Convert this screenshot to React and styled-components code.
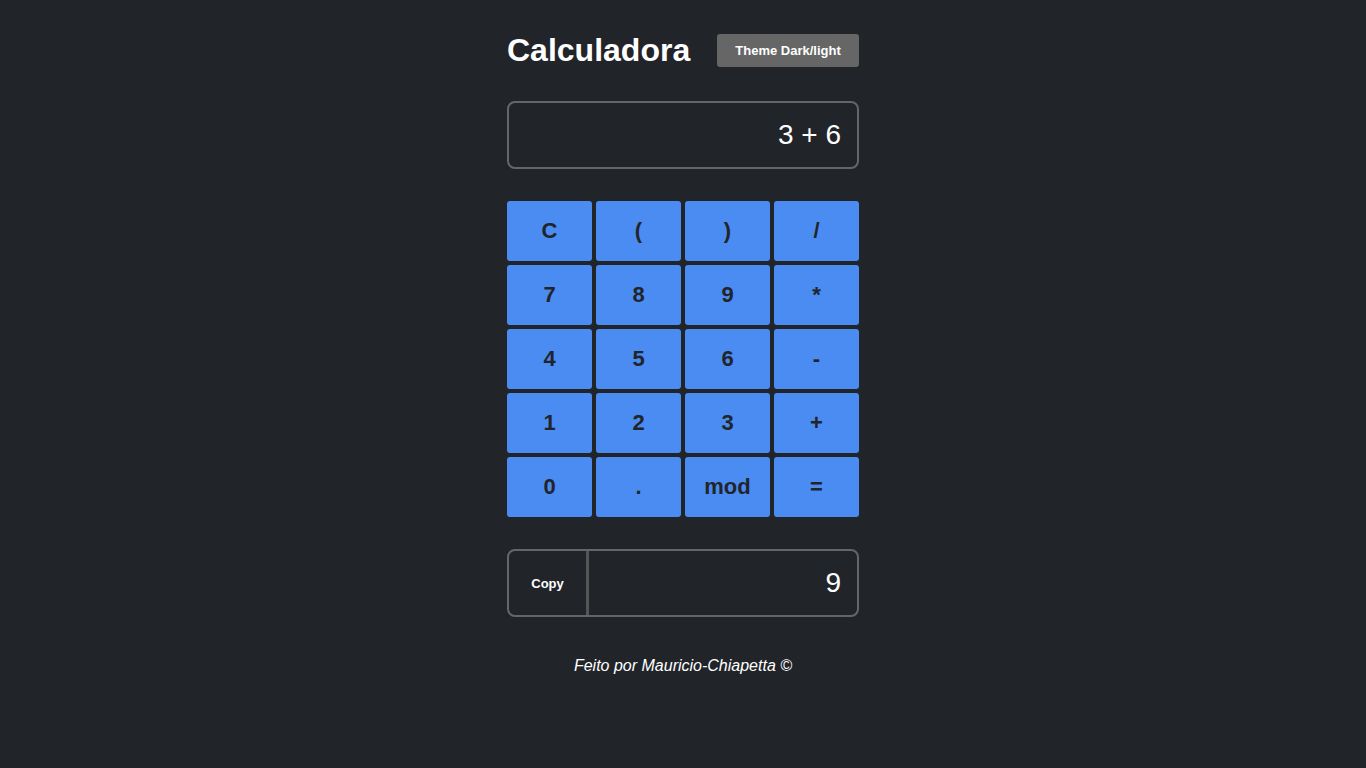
import React, { useState } from 'react';
import styled, { createGlobalStyle } from 'styled-components';

const GlobalStyle = createGlobalStyle`
  html, body {
    margin: 0;
    padding: 0;
    background: #212429;
    font-family: "Liberation Sans", Arial, sans-serif;
  }
`;

const Page = styled.div`
  width: 352px;
  margin: 0 auto;
  padding-top: 34px;
`;

const Header = styled.div`
  display: flex;
  align-items: center;
  justify-content: space-between;
  height: 33px;
`;

const Title = styled.h1`
  margin: 0;
  font-size: 32px;
  font-weight: bold;
  color: #ffffff;
`;

const ThemeButton = styled.button`
  width: 142px;
  height: 33px;
  border: none;
  border-radius: 3px;
  background: #666666;
  color: #ffffff;
  font-family: inherit;
  font-size: 13px;
  font-weight: bold;
  cursor: pointer;
`;

const Display = styled.div`
  box-sizing: border-box;
  height: 68px;
  margin-top: 34px;
  border: 2px solid #666666;
  border-radius: 8px;
  display: flex;
  align-items: center;
  justify-content: flex-end;
  padding: 0 16px;
  color: #ffffff;
  font-size: 28px;
`;

const Keys = styled.div`
  display: grid;
  grid-template-columns: repeat(4, 85px);
  grid-auto-rows: 60px;
  gap: 4px;
  margin-top: 32px;
`;

const Key = styled.button`
  border: none;
  border-radius: 3px;
  background: #4a8cf2;
  color: #212429;
  font-family: inherit;
  font-size: 22px;
  font-weight: bold;
  cursor: pointer;
  padding: 0;
`;

const Result = styled.div`
  box-sizing: border-box;
  height: 68px;
  margin-top: 32px;
  border: 2px solid #666666;
  border-radius: 8px;
  display: flex;
  overflow: hidden;
`;

const CopyButton = styled.button`
  width: 80px;
  border: none;
  border-right: 3px solid #555555;
  background: transparent;
  color: #ffffff;
  font-family: inherit;
  font-size: 13px;
  font-weight: bold;
  cursor: pointer;
  padding: 0;
`;

const ResultValue = styled.div`
  flex: 1;
  display: flex;
  align-items: center;
  justify-content: flex-end;
  padding: 0 16px;
  color: #ffffff;
  font-size: 28px;
`;

const Footer = styled.p`
  margin: 40px 0 0;
  text-align: center;
  color: #ffffff;
  font-style: italic;
  font-size: 16px;
`;

const keys = ['C', '(', ')', '/', '7', '8', '9', '*', '4', '5', '6', '-', '1', '2', '3', '+', '0', '.', 'mod', '='];

const App = () => {
  const [expression] = useState('3 + 6');
  const [result] = useState('9');

  return (
    <>
      <GlobalStyle />
      <Page>
        <Header>
          <Title>Calculadora</Title>
          <ThemeButton>Theme Dark/light</ThemeButton>
        </Header>
        <Display>{expression}</Display>
        <Keys>
          {keys.map((k) => (
            <Key key={k}>{k}</Key>
          ))}
        </Keys>
        <Result>
          <CopyButton>Copy</CopyButton>
          <ResultValue>{result}</ResultValue>
        </Result>
        <Footer>Feito por Mauricio-Chiapetta ©</Footer>
      </Page>
    </>
  );
};

export default App;
